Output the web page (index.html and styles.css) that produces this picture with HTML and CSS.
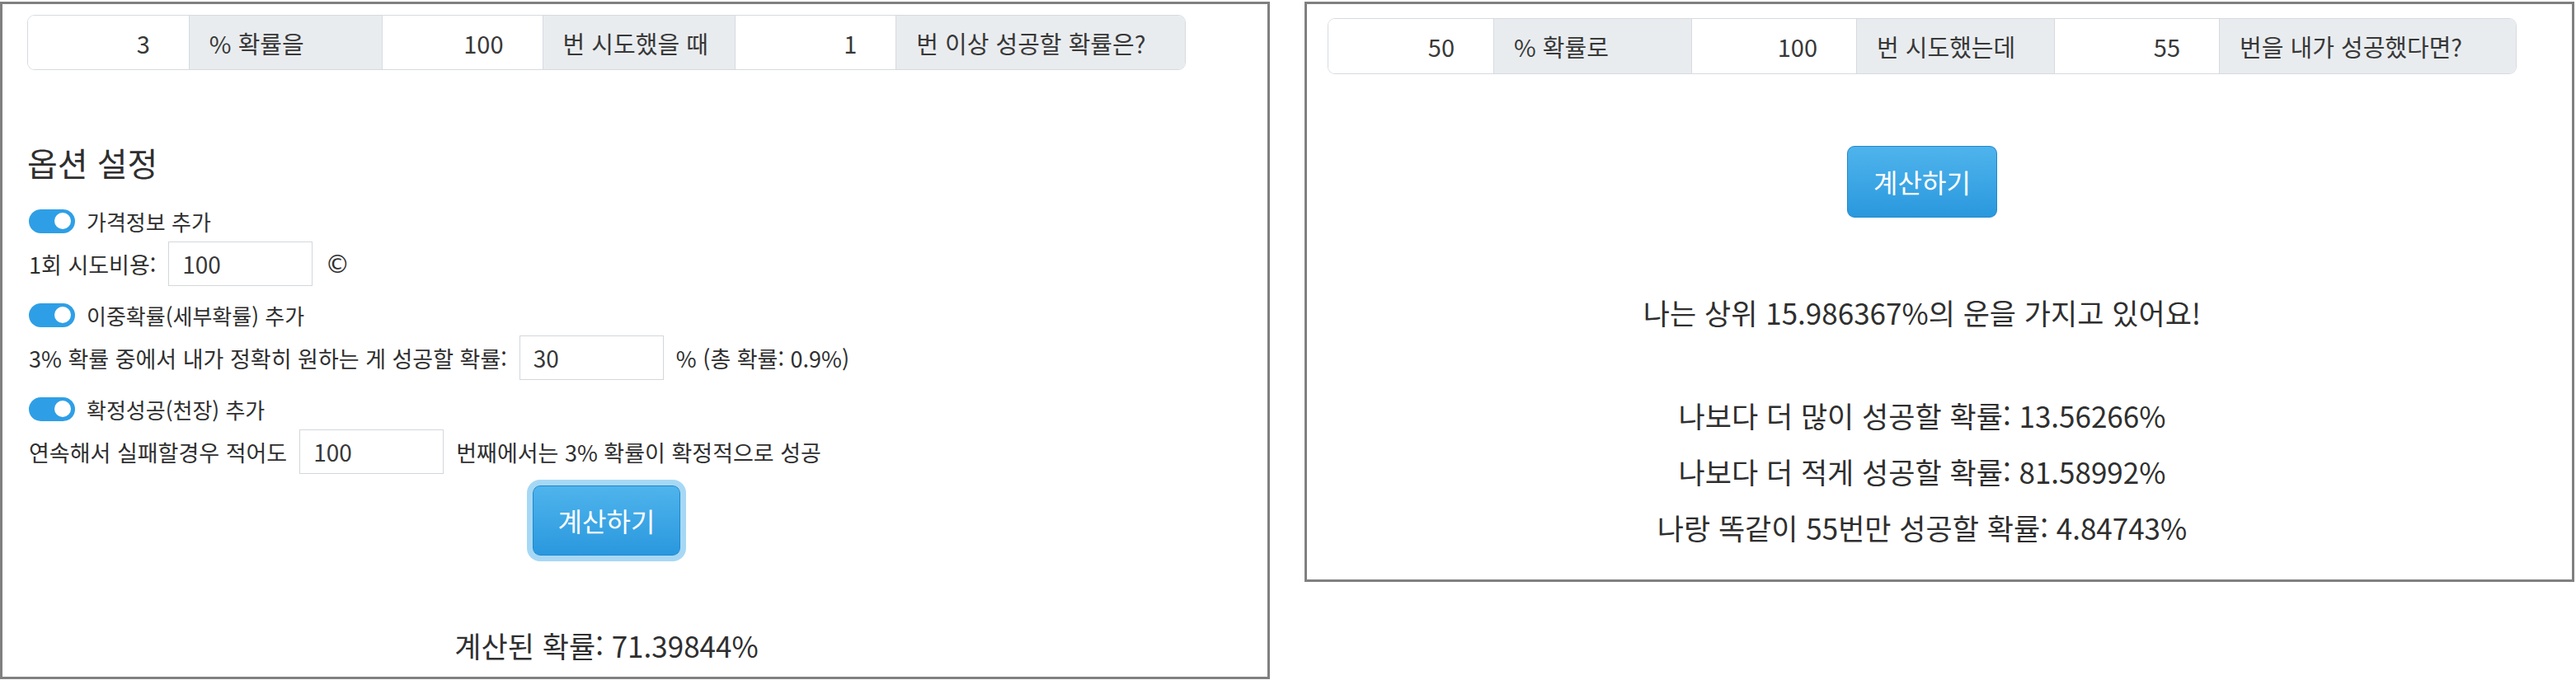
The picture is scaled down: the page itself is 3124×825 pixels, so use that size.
FILE: index.html
```html
<!DOCTYPE html>
<html lang="ko">
<head>
<meta charset="utf-8">
<title>확률 계산기</title>
<link rel="stylesheet" href="styles.css">
</head>
<body>
<div class="page">
  <section class="panel panel-left">
    <div class="content content-left">
      <div class="input-group">
        <input class="ig-input" type="text" value="3">
        <span class="ig-addon">% 확률을</span>
        <input class="ig-input" type="text" value="100">
        <span class="ig-addon">번 시도했을 때</span>
        <input class="ig-input" type="text" value="1">
        <span class="ig-addon ig-addon-wide">번 이상 성공할 확률은?</span>
      </div>

      <h2 class="options-title">옵션 설정</h2>

      <div class="option">
        <div class="toggle-row"><span class="switch"><span class="knob"></span></span><span class="toggle-label">가격정보 추가</span></div>
        <div class="field-row"><span>1회 시도비용:</span><input class="field" type="text" value="100"><span class="copy">©</span></div>
      </div>

      <div class="option">
        <div class="toggle-row"><span class="switch"><span class="knob"></span></span><span class="toggle-label">이중확률(세부확률) 추가</span></div>
        <div class="field-row"><span>3% 확률 중에서 내가 정확히 원하는 게 성공할 확률:</span><input class="field" type="text" value="30"><span>% (총 확률: 0.9%)</span></div>
      </div>

      <div class="option">
        <div class="toggle-row"><span class="switch"><span class="knob"></span></span><span class="toggle-label">확정성공(천장) 추가</span></div>
        <div class="field-row"><span>연속해서 실패할경우 적어도</span><input class="field" type="text" value="100"><span>번째에서는 3% 확률이 확정적으로 성공</span></div>
      </div>

      <div class="btn-wrap btn-wrap-left"><button class="btn btn-focus" type="button">계산하기</button></div>

      <p class="result-main">계산된 확률: 71.39844%</p>
    </div>
  </section>

  <section class="panel panel-right">
    <div class="content content-right">
      <div class="input-group input-group-right">
        <input class="ig-input" type="text" value="50">
        <span class="ig-addon">% 확률로</span>
        <input class="ig-input" type="text" value="100">
        <span class="ig-addon">번 시도했는데</span>
        <input class="ig-input" type="text" value="55">
        <span class="ig-addon ig-addon-wide">번을 내가 성공했다면?</span>
      </div>

      <div class="btn-wrap btn-wrap-right"><button class="btn btn-right" type="button">계산하기</button></div>

      <p class="luck">나는 상위 15.986367%의 운을 가지고 있어요!</p>
      <div class="stats">
        <p class="stat">나보다 더 많이 성공할 확률: 13.56266%</p>
        <p class="stat">나보다 더 적게 성공할 확률: 81.58992%</p>
        <p class="stat">나랑 똑같이 55번만 성공할 확률: 4.84743%</p>
      </div>
    </div>
  </section>
</div>
</body>
</html>
```

FILE: styles.css
```css
* { box-sizing: border-box; }

html, body {
  margin: 0;
  padding: 0;
  background: #ffffff;
}

body {
  font-family: "Noto Sans CJK KR", "Noto Sans", sans-serif;
  color: #2f2f2f;
}

.page {
  display: flex;
  align-items: flex-start;
  gap: 42px;
  padding-top: 2px;
  width: 3124px;
}

.panel {
  width: 1540px;
  border: 3px solid #808080;
  background: #fff;
  flex: none;
}

.panel-left { height: 822px; }
.panel-right { height: 704px; }

.content-left {
  width: 1435px;
  padding: 13px 0 0 30px;
}

.content-right {
  width: 1467px;
  padding: 17px 0 0 25px;
}

/* input group */
.input-group {
  display: flex;
  height: 67px;
  border: 1px solid #d6dbe0;
  border-radius: 9px;
  overflow: hidden;
  font-size: 29px;
}

.input-group-right { height: 68px; }

.ig-input,
.ig-addon {
  flex: none;
  min-width: 0;
  height: 100%;
  border: none;
  margin: 0;
  font: inherit;
  color: #383838;
}

.ig-input + .ig-addon,
.ig-addon + .ig-input {
  border-left: 1px solid #d6dbe0;
}

.ig-input {
  width: 13.889%;
  text-align: right;
  padding: 0 47px 0 0;
  background: #fff;
  outline: none;
}

.ig-addon {
  width: 16.667%;
  display: flex;
  align-items: center;
  padding-left: 24px;
  background: #e9ecef;
  white-space: nowrap;
}

.ig-addon-wide { width: 25%; }

/* options */
.options-title {
  margin: 89px 0 23px;
  font-size: 40px;
  line-height: 46px;
  font-weight: 400;
}

.option { margin-bottom: 10px; }

.toggle-row {
  height: 50px;
  display: flex;
  align-items: center;
  gap: 14px;
  font-size: 26px;
  padding-left: 2px;
}

.switch {
  width: 56px;
  height: 29px;
  border-radius: 15px;
  background: #2e9fe6;
  display: flex;
  align-items: center;
  justify-content: flex-end;
  padding-right: 5px;
  flex: none;
}

.knob {
  width: 20px;
  height: 20px;
  border-radius: 50%;
  background: #fff;
}

.field-row {
  height: 54px;
  display: flex;
  align-items: center;
  gap: 15px;
  font-size: 27px;
  padding-left: 2px;
  white-space: nowrap;
}

.field {
  width: 175px;
  height: 54px;
  border: 1px solid #d3d7db;
  padding: 0 0 0 16px;
  font: inherit;
  font-size: 28px;
  color: #383838;
  background: #fff;
  outline: none;
}

.copy {
  font-family: "DejaVu Sans", sans-serif;
  font-size: 30px;
}

/* buttons */
.btn-wrap {
  display: flex;
  justify-content: center;
}

.btn-wrap-left { margin-top: 14px; }
.btn-wrap-right { margin-top: 87px; }

.btn {
  font-family: inherit;
  font-size: 32px;
  line-height: 45px;
  height: 85px;
  padding: 0 30px;
  color: #fff;
  border: 1px solid #2088cb;
  border-radius: 9px;
  background: linear-gradient(#4fb4ec, #2a98de);
  cursor: pointer;
}

.btn-right {
  height: 87px;
  padding: 0 31px;
}

.btn-focus {
  box-shadow: 0 0 0 7px #a6d8f5;
}

/* results */
.result-main {
  margin: 84px 0 0;
  text-align: center;
  font-size: 35px;
  line-height: 50px;
}

.luck {
  margin: 90px 0 0;
  text-align: center;
  font-size: 35px;
  line-height: 50px;
}

.stats { margin-top: 66px; }

.stat {
  margin: 0;
  text-align: center;
  font-size: 35px;
  line-height: 68px;
}
```
